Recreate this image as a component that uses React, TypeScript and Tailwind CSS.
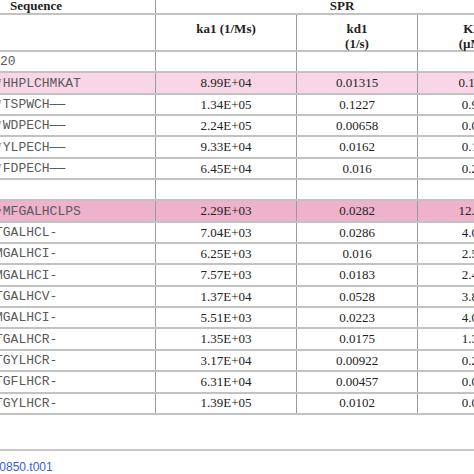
const serif = { fontFamily: '"Liberation Serif", "Times New Roman", serif' };

type Row = {
  seq: string;
  lead?: string;
  ka?: string;
  kd?: string;
  KD?: string;
  tone?: "light" | "dark";
};

const rows: Row[] = [
  { seq: "20" },
  { lead: "*", seq: "HHPLCHMKAT", ka: "8.99E+04", kd: "0.01315", KD: "0.146", tone: "light" },
  { lead: "*", seq: "TSPWCH——", ka: "1.34E+05", kd: "0.1227", KD: "0.92" },
  { lead: "*", seq: "WDPECH——", ka: "2.24E+05", kd: "0.00658", KD: "0.03" },
  { lead: "*", seq: "YLPECH——", ka: "9.33E+04", kd: "0.0162", KD: "0.17" },
  { lead: "*", seq: "FDPECH——", ka: "6.45E+04", kd: "0.016", KD: "0.25" },
  { seq: "" },
  { lead: "•", seq: "MFGALHCLPS", ka: "2.29E+03", kd: "0.0282", KD: "12.31", tone: "dark" },
  { lead: "T", seq: "GALHCL-", ka: "7.04E+03", kd: "0.0286", KD: "4.06" },
  { lead: "M", seq: "GALHCI-", ka: "6.25E+03", kd: "0.016", KD: "2.56" },
  { lead: "M", seq: "GALHCI-", ka: "7.57E+03", kd: "0.0183", KD: "2.42" },
  { lead: "T", seq: "GALHCV-", ka: "1.37E+04", kd: "0.0528", KD: "3.85" },
  { lead: "M", seq: "GALHCI-", ka: "5.51E+03", kd: "0.0223", KD: "4.05" },
  { lead: "T", seq: "GALHCR-", ka: "1.35E+03", kd: "0.0175", KD: "1.30" },
  { lead: "T", seq: "GYLHCR-", ka: "3.17E+04", kd: "0.00922", KD: "0.29" },
  { lead: "T", seq: "GFLHCR-", ka: "6.31E+04", kd: "0.00457", KD: "0.07" },
  { lead: "T", seq: "GYLHCR-", ka: "1.39E+05", kd: "0.0102", KD: "0.07" },
];

function DataRow({ row }: { row: Row }) {
  const bg =
    row.tone === "light" ? "bg-[#f9d6e5]" : row.tone === "dark" ? "bg-[#eeb2cb]" : "bg-white";
  return (
    <div className={`flex h-[21.35px] border-b-2 border-[#c2c2c2] ${bg}`}>
      <div className="flex w-[156px] shrink-0 items-center overflow-hidden border-r border-[#9a9a9a]">
        <span
          className={`whitespace-pre text-[13px] leading-none text-[#5a5a5a] ${row.lead ? "-ml-[5px]" : ""}`}
          style={{ fontFamily: '"Liberation Mono", "Courier New", monospace' }}
        >
          {row.lead ?? ""}
          {row.seq}
        </span>
      </div>
      <div
        className="flex w-[141px] shrink-0 items-center justify-center border-r border-[#9a9a9a] text-[13px] text-[#222]"
        style={serif}
      >
        {row.ka}
      </div>
      <div
        className="flex w-[121px] shrink-0 items-center justify-center border-r border-[#9a9a9a] text-[13px] text-[#222]"
        style={serif}
      >
        {row.kd}
      </div>
      <div
        className="flex w-[110px] shrink-0 items-center justify-center text-[13px] text-[#222]"
        style={serif}
      >
        {row.KD}
      </div>
    </div>
  );
}

export default function App() {
  return (
    <div className="h-[474px] w-[474px] overflow-hidden bg-white">
      <div className="w-[528px]">
        <div className="flex h-[15px] border-b-2 border-[#c2c2c2]" style={serif}>
          <div className="w-[156px] shrink-0 border-r border-[#9a9a9a] pl-[10px] text-[13px] font-bold leading-[12px] text-[#222]">
            Sequence
          </div>
          <div className="flex-1 text-center text-[13px] font-bold leading-[12px] text-[#222]">SPR</div>
        </div>
        <div className="flex h-[37px] border-b-2 border-[#c2c2c2] text-[13px] font-bold leading-[15px] text-[#222]" style={serif}>
          <div className="w-[156px] shrink-0 border-r border-[#9a9a9a]" />
          <div className="w-[141px] shrink-0 border-r border-[#9a9a9a] pt-[6px] text-center">ka1 (1/Ms)</div>
          <div className="w-[121px] shrink-0 border-r border-[#9a9a9a] pt-[6px] text-center">
            kd1
            <br />
            (1/s)
          </div>
          <div className="w-[110px] shrink-0 pt-[6px] text-center">
            KD
            <br />
            (µM)
          </div>
        </div>
        {rows.map((row, i) => (
          <DataRow key={i} row={row} />
        ))}
      </div>
      <div className="mt-[34px] h-[2px] w-full bg-[#c8c8c8]" />
      <div
        className="-ml-[4px] mt-[8px] text-[12px] leading-[16px] text-[#3b5fc6]"
        style={{ fontFamily: '"Liberation Sans", Arial, sans-serif' }}
      >
        /0850.t001
      </div>
    </div>
  );
}
